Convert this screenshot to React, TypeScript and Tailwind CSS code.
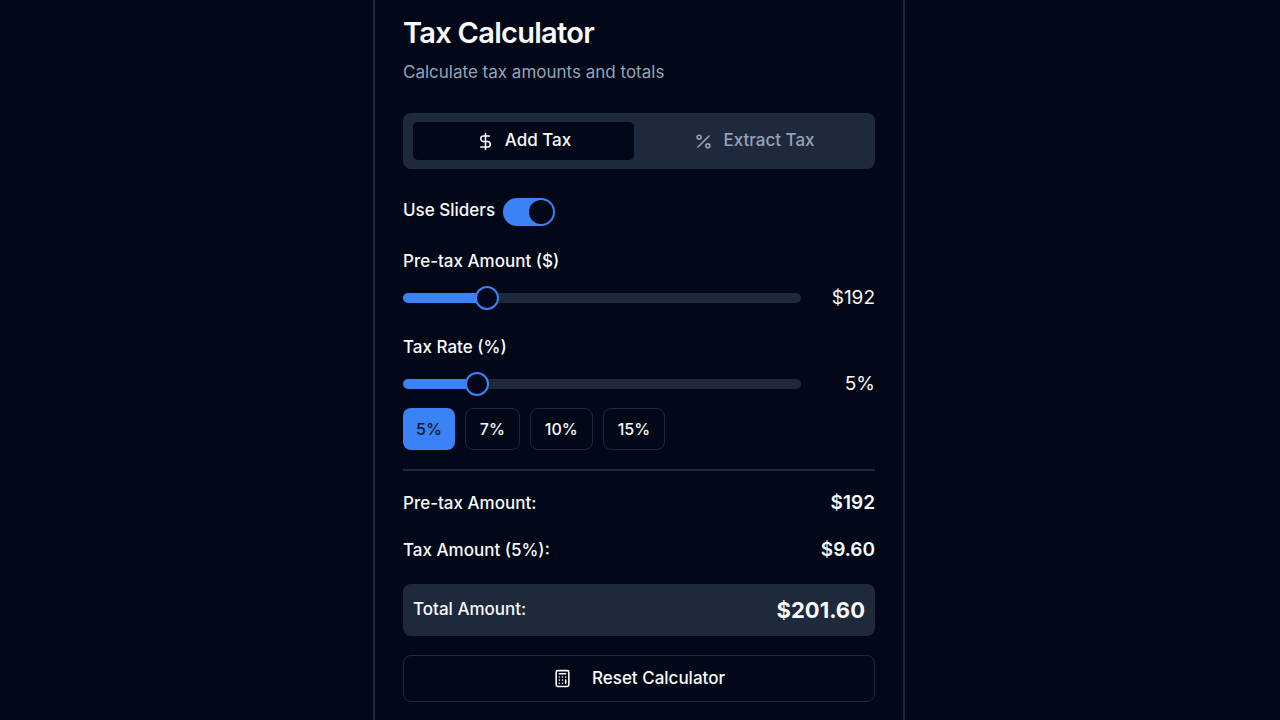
import { useState } from 'react';
import { Calculator, DollarSign, Percent } from 'lucide-react';
import { clsx } from 'clsx';

type Mode = 'add' | 'extract';

const presets = [5, 7, 10, 15];

interface SliderProps {
  id: string;
  label: string;
  value: number;
  max: number;
  display: string;
  onChange: (value: number) => void;
}

const SliderField = ({ id, label, value, max, display, onChange }: SliderProps) => {
  const percent = (value / max) * 100;

  return (
    <div>
      <label htmlFor={id} className="block leading-6 font-medium">
        {label}
      </label>
      <div className="mt-[11px] flex items-center">
        <input
          id={id}
          type="range"
          min={0}
          max={max}
          value={value}
          onChange={(e) => onChange(Number(e.target.value))}
          className="h-2.5 min-w-0 flex-1 cursor-pointer appearance-none rounded-full [&::-webkit-slider-thumb]:size-6 [&::-webkit-slider-thumb]:appearance-none [&::-webkit-slider-thumb]:rounded-full [&::-webkit-slider-thumb]:border-2 [&::-webkit-slider-thumb]:border-[#3b82f6] [&::-webkit-slider-thumb]:bg-[#020817]"
          style={{ background: `linear-gradient(to right, #3b82f6 ${percent}%, #1e293b ${percent}%)` }}
        />
        <span className="w-[74px] text-right text-[19px] leading-7">{display}</span>
      </div>
    </div>
  );
};

const App = () => {
  const [mode, setMode] = useState<Mode>('add');
  const [useSliders, setUseSliders] = useState(true);
  const [amount, setAmount] = useState(192);
  const [rate, setRate] = useState(5);

  const pretax = mode === 'add' ? amount : amount / (1 + rate / 100);
  const tax = (pretax * rate) / 100;
  const total = pretax + tax;
  const pretaxText = Number.isInteger(pretax) ? `$${pretax}` : `$${pretax.toFixed(2)}`;

  const reset = () => {
    setMode('add');
    setUseSliders(true);
    setAmount(192);
    setRate(5);
  };

  const tabClass = (tab: Mode) =>
    clsx(
      'flex h-[38px] items-center justify-center gap-2.5 rounded-[5px] font-medium',
      mode === tab ? 'bg-[#020817] text-[#f8fafc]' : 'text-[#94a3b8]'
    );

  return (
    <div className="flex min-h-screen justify-center bg-[#020817] pr-0.5 font-['Inter',sans-serif] text-[17px] text-[#f8fafc]">
      <main className="w-full max-w-[532px] border-x-2 border-[#1e293b] px-7 pt-4 pb-4">
        <h1 className="text-[29px] leading-[34px] font-semibold tracking-tight">Tax Calculator</h1>
        <p className="mt-2.5 leading-6 text-[#94a3b8]">Calculate tax amounts and totals</p>

        <div role="tablist" className="mt-[29px] grid grid-cols-2 gap-2.5 rounded-lg bg-[#1e293b] px-2.5 py-[9px]">
          <button type="button" role="tab" aria-selected={mode === 'add'} className={tabClass('add')} onClick={() => setMode('add')}>
            <DollarSign size={19} />
            Add Tax
          </button>
          <button type="button" role="tab" aria-selected={mode === 'extract'} className={tabClass('extract')} onClick={() => setMode('extract')}>
            <Percent size={19} />
            Extract Tax
          </button>
        </div>

        <div className="mt-[29px] flex items-start gap-2">
          <label htmlFor="use-sliders" className="leading-6 font-medium">
            Use Sliders
          </label>
          <button
            id="use-sliders"
            type="button"
            role="switch"
            aria-checked={useSliders}
            onClick={() => setUseSliders(!useSliders)}
            className={clsx(
              'flex h-7 w-[52px] items-center rounded-full px-0.5',
              useSliders ? 'justify-end bg-[#3b82f6]' : 'justify-start bg-[#1e293b]'
            )}
          >
            <span className="size-6 rounded-full bg-[#020817]" />
          </button>
        </div>

        <div className="mt-[23px] flex flex-col gap-[23px]">
          <SliderField id="amount" label="Pre-tax Amount ($)" value={amount} max={1000} display={`$${amount}`} onChange={setAmount} />
          <SliderField id="rate" label="Tax Rate (%)" value={rate} max={30} display={`${rate}%`} onChange={setRate} />
        </div>

        <div className="mt-2.5 flex gap-2.5">
          {presets.map((preset) => (
            <button
              key={preset}
              type="button"
              onClick={() => setRate(preset)}
              className={clsx(
                'h-[42px] rounded-lg text-base font-medium',
                rate === preset ? 'bg-[#3b82f6] px-[13px] text-[#0f172a]' : 'border border-[#1e293b] px-3.5'
              )}
            >
              {preset}%
            </button>
          ))}
        </div>

        <hr className="mt-[19px] border-t-2 border-[#1e293b]" />

        <dl>
          <div className="mt-[18px] flex items-center justify-between leading-7">
            <dt className="font-medium">Pre-tax Amount:</dt>
            <dd className="text-[19px] font-semibold">{pretaxText}</dd>
          </div>
          <div className="mt-[19px] flex items-center justify-between leading-7">
            <dt className="font-medium">Tax Amount ({rate}%):</dt>
            <dd className="text-[19px] font-semibold">${tax.toFixed(2)}</dd>
          </div>
          <div className="mt-5 flex h-[52px] items-center justify-between rounded-lg bg-[#1e293b] px-2.5">
            <dt className="font-medium">Total Amount:</dt>
            <dd className="text-[22px] font-bold">${total.toFixed(2)}</dd>
          </div>
        </dl>

        <button
          type="button"
          onClick={reset}
          className="mt-[19px] flex h-[47px] w-full items-center justify-center gap-5 rounded-lg border border-[#1e293b] font-medium"
        >
          <Calculator size={19} />
          Reset Calculator
        </button>
      </main>
    </div>
  );
};

export default App;
